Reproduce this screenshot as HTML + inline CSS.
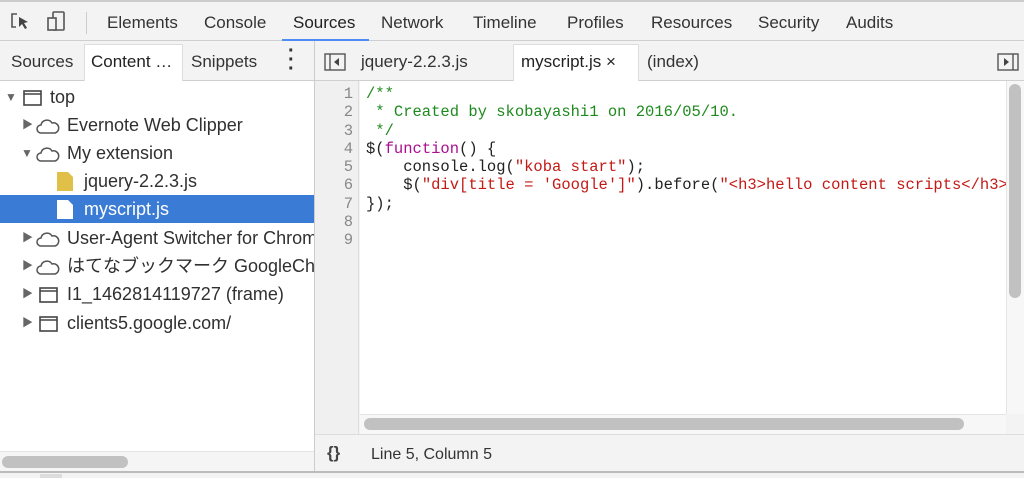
<!DOCTYPE html>
<html><head><meta charset="utf-8"><style>
*{margin:0;padding:0;box-sizing:border-box}
body{width:1024px;height:478px;overflow:hidden;background:#f3f3f3;font-family:"Liberation Sans","Noto Sans CJK JP",sans-serif;color:#303030;position:relative}
.a{position:absolute}
.tb{top:0;left:0;width:1024px;height:41px;border-top:2px solid #ccc;border-bottom:1px solid #cfcfcf;background:#f3f3f3}
.tab{position:absolute;top:11px;font-size:17px;color:#333}
.row2{top:41px;left:0;width:1024px;height:40px;border-bottom:1px solid #cfcfcf;background:#f3f3f3}
.left{top:81px;left:0;width:314px;height:371px;background:#fff}
.tr{position:absolute;left:0;width:314px;height:28px;font-size:18px;line-height:28px;white-space:nowrap;overflow:hidden}
.code{font-family:"Liberation Mono",monospace;font-size:15.5px;line-height:18.25px;white-space:pre}
.g{color:#1e8a1e}.r{color:#c41a16}.p{color:#aa0d91}
</style></head><body>
<div class="a tb">
<svg class="a" style="left:10px;top:10px" width="22" height="20" viewBox="0 0 22 20"><path d="M7 2H2v13h4" fill="none" stroke="#555" stroke-width="1.6"/><path d="M9 5l9 5-4 1 3 5-2 1-3-5-3 3z" fill="#444"/></svg>
<svg class="a" style="left:46px;top:8px" width="22" height="24" viewBox="0 0 22 24"><rect x="7" y="2" width="11" height="18" rx="1" fill="none" stroke="#555" stroke-width="1.6"/><rect x="2" y="8" width="8" height="12" fill="#f3f3f3" stroke="#555" stroke-width="1.6"/></svg>
<div class="a" style="left:86px;top:10px;width:1px;height:22px;background:#ccc"></div>
<span class="tab" style="left:107px">Elements</span>
<span class="tab" style="left:204px">Console</span>
<span class="tab" style="left:293px;color:#222">Sources</span>
<div class="a" style="left:282px;top:37px;width:87px;height:2px;background:#4c8ef5"></div>
<span class="tab" style="left:381px">Network</span>
<span class="tab" style="left:473px">Timeline</span>
<span class="tab" style="left:567px">Profiles</span>
<span class="tab" style="left:651px">Resources</span>
<span class="tab" style="left:758px">Security</span>
<span class="tab" style="left:846px">Audits</span>
</div>
<div class="a row2">
<span class="tab" style="left:11px;top:11px">Sources</span>
<div class="a" style="left:84px;top:3px;width:99px;height:37px;background:#fff;border:1px solid #ddd;border-bottom:none"></div>
<span class="tab" style="left:91px;top:11px;color:#222">Content …</span>
<span class="tab" style="left:191px;top:11px">Snippets</span>
<span class="tab" style="left:288px;top:6px;font-size:20px;font-weight:bold;line-height:9px;width:6px">·<br>·<br>·</span>
<div class="a" style="left:314px;top:0;width:1px;height:40px;background:#ccc"></div>
<svg class="a" style="left:324px;top:12px" width="22" height="18" viewBox="0 0 22 18"><rect x="1" y="1" width="20" height="16" fill="none" stroke="#555" stroke-width="1.4"/><line x1="6" y1="1" x2="6" y2="17" stroke="#555" stroke-width="1.4"/><path d="M15 5v8l-5-4z" fill="#444"/></svg>
<span class="tab" style="left:361px">jquery-2.2.3.js</span>
<div class="a" style="left:513px;top:3px;width:126px;height:37px;background:#fff;border:1px solid #ddd;border-bottom:none"></div>
<span class="tab" style="left:521px;color:#222">myscript.js ×</span>
<span class="tab" style="left:647px">(index)</span>
<svg class="a" style="left:997px;top:12px" width="22" height="18" viewBox="0 0 22 18"><rect x="1" y="1" width="20" height="16" fill="none" stroke="#555" stroke-width="1.4"/><line x1="16" y1="1" x2="16" y2="17" stroke="#555" stroke-width="1.4"/><path d="M7 5v8l5-4z" fill="#444"/></svg>
</div>
<div class="a left">
<div class="tr" style="top:2px"><span class="a" style="left:5px;font-size:12px;color:#666">▼</span><svg class="a" style="left:23px;top:7px" width="19" height="16"><rect x="1" y="1" width="17" height="14" fill="none" stroke="#444" stroke-width="1.6"/><line x1="1" y1="4" x2="18" y2="4" stroke="#444" stroke-width="1.6"/></svg><span class="a" style="left:50px">top</span></div>
<div class="tr" style="top:30px"><span class="a" style="left:22px;font-size:11px;color:#666">▶</span><svg class="a" style="left:35px;top:7px" width="26" height="16" viewBox="0 0 26 16"><path d="M6 15a4 4 0 0 1 0-8 6 6 0 0 1 11-2 5 5 0 0 1 3 10z" fill="none" stroke="#555" stroke-width="1.5"/></svg><span class="a" style="left:67px">Evernote Web Clipper</span></div>
<div class="tr" style="top:58px"><span class="a" style="left:21px;font-size:12px;color:#666">▼</span><svg class="a" style="left:35px;top:7px" width="26" height="16" viewBox="0 0 26 16"><path d="M6 15a4 4 0 0 1 0-8 6 6 0 0 1 11-2 5 5 0 0 1 3 10z" fill="none" stroke="#555" stroke-width="1.5"/></svg><span class="a" style="left:67px">My extension</span></div>
<div class="tr" style="top:86px"><svg class="a" style="left:56px;top:4px" width="18" height="21" viewBox="0 0 18 21"><path d="M1 1h11l5 5v14H1z" fill="#e1c04a"/></svg><span class="a" style="left:84px">jquery-2.2.3.js</span></div>
<div class="tr" style="top:114px;background:#3a7bd5;color:#fff"><svg class="a" style="left:56px;top:4px" width="18" height="21" viewBox="0 0 18 21"><path d="M1 1h11l5 5v14H1z" fill="#fff"/></svg><span class="a" style="left:84px">myscript.js</span></div>
<div class="tr" style="top:143px"><span class="a" style="left:22px;font-size:11px;color:#666">▶</span><svg class="a" style="left:35px;top:7px" width="26" height="16" viewBox="0 0 26 16"><path d="M6 15a4 4 0 0 1 0-8 6 6 0 0 1 11-2 5 5 0 0 1 3 10z" fill="none" stroke="#555" stroke-width="1.5"/></svg><span class="a" style="left:67px">User-Agent Switcher for Chrome</span></div>
<div class="tr" style="top:171px"><span class="a" style="left:22px;font-size:11px;color:#666">▶</span><svg class="a" style="left:35px;top:7px" width="26" height="16" viewBox="0 0 26 16"><path d="M6 15a4 4 0 0 1 0-8 6 6 0 0 1 11-2 5 5 0 0 1 3 10z" fill="none" stroke="#555" stroke-width="1.5"/></svg><span class="a" style="left:67px">はてなブックマーク GoogleChrome</span></div>
<div class="tr" style="top:199px"><span class="a" style="left:22px;font-size:11px;color:#666">▶</span><svg class="a" style="left:39px;top:7px" width="19" height="16"><rect x="1" y="1" width="17" height="14" fill="none" stroke="#444" stroke-width="1.6"/><line x1="1" y1="4" x2="18" y2="4" stroke="#444" stroke-width="1.6"/></svg><span class="a" style="left:67px">I1_1462814119727 (frame)</span></div>
<div class="tr" style="top:228px"><span class="a" style="left:22px;font-size:11px;color:#666">▶</span><svg class="a" style="left:39px;top:7px" width="19" height="16"><rect x="1" y="1" width="17" height="14" fill="none" stroke="#444" stroke-width="1.6"/><line x1="1" y1="4" x2="18" y2="4" stroke="#444" stroke-width="1.6"/></svg><span class="a" style="left:67px">clients5.google.com/</span></div>
</div>
<div class="a" style="left:0;top:451px;width:314px;height:21px;background:#f5f5f5;border-top:1px solid #e5e5e5"></div>
<div class="a" style="left:2px;top:456px;width:126px;height:12px;border-radius:6px;background:#c1c1c1"></div>
<div class="a" style="left:314px;top:81px;width:1px;height:391px;background:#ccc"></div>
<div class="a" style="left:315px;top:81px;width:44px;height:353px;background:#f0f0f0;border-right:1px solid #ddd"></div>
<div class="a code" style="left:315px;top:85px;width:38px;text-align:right;color:#888">1
2
3
4
5
6
7
8
9</div>
<div class="a" style="left:360px;top:81px;width:646px;height:333px;background:#fff;overflow:hidden">
<div class="a code" style="left:6px;top:4px;color:#222"><span class="g">/**
 * Created by skobayashi1 on 2016/05/10.
 */</span>
$(<span class="p">function</span>() {
    console.log(<span class="r">"koba start"</span>);
    $(<span class="r">"div[title = 'Google']"</span>).before(<span class="r">"&lt;h3&gt;hello content scripts&lt;/h3&gt;"</span>);
});</div>
</div>
<div class="a" style="left:1006px;top:81px;width:18px;height:333px;background:#f7f7f7;border-left:1px solid #e5e5e5"></div>
<div class="a" style="left:1009px;top:84px;width:12px;height:214px;border-radius:6px;background:#c1c1c1"></div>
<div class="a" style="left:360px;top:414px;width:646px;height:20px;background:#f7f7f7;border-top:1px solid #e5e5e5"></div>
<div class="a" style="left:364px;top:418px;width:600px;height:12px;border-radius:6px;background:#c1c1c1"></div>
<div class="a" style="left:315px;top:434px;width:709px;height:38px;background:#f3f3f3;border-top:1px solid #ddd"></div>
<span class="a" style="left:327px;top:443px;font-size:17px;font-weight:bold;color:#444">{}</span>
<span class="a" style="left:371px;top:446px;font-size:16px;color:#333">Line 5, Column 5</span>
<div class="a" style="left:0;top:471px;width:1024px;height:2px;background:#bbb"></div>
<div class="a" style="left:40px;top:474px;width:22px;height:4px;background:#ddd"></div>
</body></html>
